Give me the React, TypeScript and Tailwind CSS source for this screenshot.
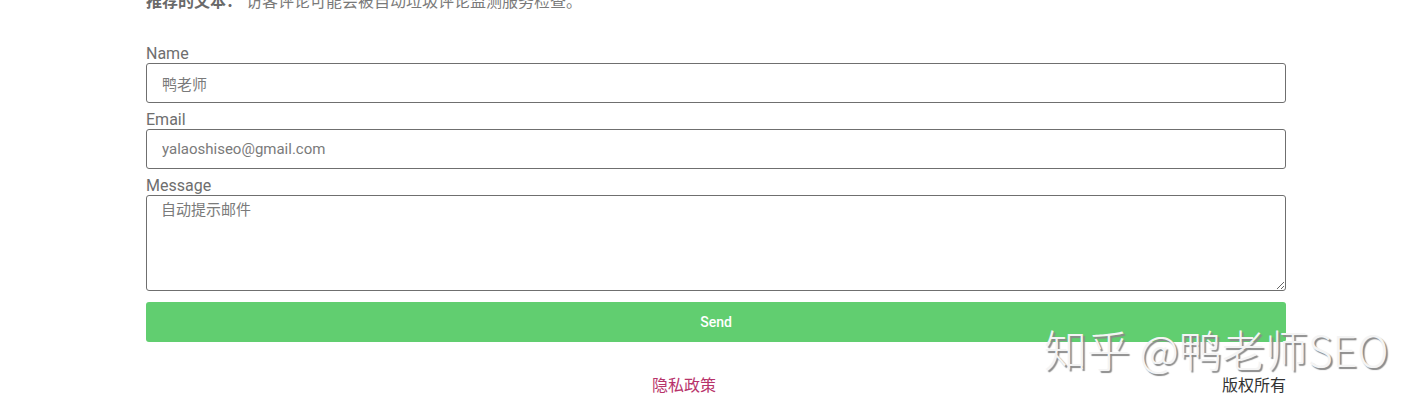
import React from "react";

export default function App() {
  const font = "font-['Roboto','Noto_Sans_CJK_SC',sans-serif]";
  return (
    <div className={`relative h-[409px] w-[1425px] overflow-hidden bg-white ${font}`}>
      <div className="ml-[146px] flex w-[1140px] flex-col">
        <p className="-mt-[12px] h-[24px] text-[16px] leading-[24px] text-[#7a7a7a] font-['Noto_Sans_CJK_SC',sans-serif]">
          <strong className="font-bold text-[#6a6a6a]">推荐的文本：</strong>
          <span className="ml-[4px]">访客评论可能会被自动垃圾评论监测服务检查。</span>
        </p>

        <label className="mt-[34px] block h-[16px] text-[16px] leading-[16px] text-[#6e6e6e]">Name</label>
        <input
          readOnly
          value="鸭老师"
          className="mt-px h-[40px] w-full rounded-[3px] border border-[#6f6f6f] px-[15px] text-[15px] text-[#7a7a7a] outline-none font-['Roboto','Noto_Sans_CJK_SC',sans-serif]"
        />

        <label className="mt-[9px] block h-[16px] text-[16px] leading-[16px] text-[#6e6e6e]">Email</label>
        <input
          readOnly
          value="yalaoshiseo@gmail.com"
          className="mt-px h-[40px] w-full rounded-[3px] border border-[#6f6f6f] px-[15px] text-[15px] text-[#7a7a7a] outline-none"
        />

        <label className="mt-[9px] block h-[16px] text-[16px] leading-[16px] text-[#6e6e6e]">Message</label>
        <textarea
          readOnly
          value="自动提示邮件"
          className="mt-px block h-[96px] w-full resize-y rounded-[3px] border border-[#6f6f6f] px-[14px] py-[4px] text-[15px] leading-[20px] text-[#7a7a7a] outline-none font-['Roboto','Noto_Sans_CJK_SC',sans-serif]"
        />

        <button className="mt-[11px] h-[40px] w-full rounded-[3px] bg-[#61ce70] text-[14px] font-medium text-white">
          Send
        </button>

        <div className="mt-[34px] grid grid-cols-2 text-[16px] leading-[16px] font-['Noto_Sans_CJK_SC',sans-serif]">
          <div className="text-right text-[#b8336a]">隐私政策</div>
          <div className="text-right text-[#333]">版权所有</div>
        </div>
      </div>

      <div className="pointer-events-none absolute left-[1044px] top-[326px] whitespace-nowrap text-[43px] leading-[44px] text-[#f4f4f4] font-['Noto_Sans_CJK_SC',sans-serif] font-light [text-shadow:2px_2px_1px_#8a8a8a]">
        知乎 @鸭老师SEO
      </div>
    </div>
  );
}
